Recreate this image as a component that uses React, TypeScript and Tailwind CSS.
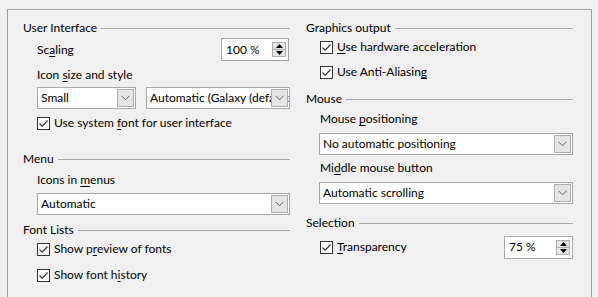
import React from 'react'

// Options dialog pane: two columns of grouped settings inside an etched frame.

function Mn({ children }: { children: React.ReactNode }) {
  return <span className="underline decoration-1 underline-offset-2">{children}</span>
}

function Heading({ children, className = '' }: { children: React.ReactNode; className?: string }) {
  return (
    <div className={`flex h-[16px] items-center gap-[4px] leading-[16px] ${className}`}>
      <span className="whitespace-nowrap">{children}</span>
      <div className="h-px flex-1 bg-[#a9a9a9]" />
    </div>
  )
}

function Label({ children, className = '' }: { children: React.ReactNode; className?: string }) {
  return <div className={`ml-[14px] h-[16px] whitespace-nowrap leading-[16px] ${className}`}>{children}</div>
}

function CheckBox() {
  return (
    <div className="flex h-[13px] w-[13px] shrink-0 items-center justify-center border border-[#333] bg-white">
      <svg width="11" height="11" viewBox="0 0 11 11" fill="none">
        <path d="M1.5 5.5 L4.2 8.2 L9.5 2.5" stroke="#333" strokeWidth="1.2" />
      </svg>
    </div>
  )
}

function Check({ children, className = '' }: { children: React.ReactNode; className?: string }) {
  return (
    <div className={`ml-[14px] flex h-[16px] items-center gap-[4px] leading-[16px] ${className}`}>
      <CheckBox />
      <span className="whitespace-nowrap">{children}</span>
    </div>
  )
}

function Chevron() {
  return (
    <svg width="9" height="6" viewBox="0 0 9 6" fill="none">
      <path d="M0.5 0.8 L4.5 4.8 L8.5 0.8" stroke="#606060" strokeWidth="1" />
    </svg>
  )
}

function Select({ value, className = '' }: { value: string; className?: string }) {
  return (
    <div className={`relative flex h-[22px] items-center overflow-hidden border border-[#a8a8a8] bg-white ${className}`}>
      <span className="flex-1 whitespace-nowrap pl-[3px] leading-[20px]">{value}</span>
      <div className="absolute right-px top-px flex h-[18px] w-[17px] items-center justify-center border border-[#adadad] bg-[#e5e5e5]">
        <Chevron />
      </div>
    </div>
  )
}

function Spin({ value, className = '' }: { value: string; className?: string }) {
  return (
    <div className={`flex h-[23px] w-[68px] items-center border border-[#a8a8a8] bg-white ${className}`}>
      <span className="flex-1 pl-[4px] leading-[20px]">{value}</span>
      <div className="mr-[2px] flex h-[15px] w-[14px] flex-col border border-[#adadad] bg-[#e5e5e5]">
        <div className="flex flex-1 items-center justify-center border-b border-[#adadad]">
          <svg width="7" height="4" viewBox="0 0 7 4">
            <path d="M0 4 L3.5 0 L7 4 Z" fill="#000" />
          </svg>
        </div>
        <div className="flex flex-1 items-center justify-center">
          <svg width="7" height="4" viewBox="0 0 7 4">
            <path d="M0 0 L3.5 4 L7 0 Z" fill="#000" />
          </svg>
        </div>
      </div>
    </div>
  )
}

export default function App() {
  return (
    <div
      className="h-[297px] w-[598px] overflow-hidden bg-[#f0f0f0] pl-[7px] pt-[9px] text-[12px] text-black"
      style={{ fontFamily: 'Lato, "Noto Sans", sans-serif' }}
    >
      <div className="flex h-[300px] w-[585px] gap-[16px] border-x border-t border-[#a0a0a0] pl-[15px]">
        {/* left column */}
        <div className="flex w-[267px] flex-col">
          <Heading className="mt-[10px]">User Interface</Heading>
          <div className="ml-[14px] mt-[2px] flex h-[23px] items-center justify-between">
            <span>
              Sc<Mn>a</Mn>ling
            </span>
            <Spin value="100 %" className="mr-px" />
          </div>
          <Label className="mt-[6px]">
            Icon <Mn>s</Mn>ize and style
          </Label>
          <div className="ml-[14px] mt-[4px] flex gap-[10px]">
            <Select value="Small" className="w-[99px]" />
            <Select value="Automatic (Galaxy (default))" className="w-[144px]" />
          </div>
          <Check className="mt-[6px]">
            Use system <Mn>f</Mn>ont for user interface
          </Check>
          <Heading className="mt-[20px]">Menu</Heading>
          <Label className="mt-[5px]">
            Icons in <Mn>m</Mn>enus
          </Label>
          <Select value="Automatic" className="ml-[14px] mt-[5px]" />
          <Heading className="mt-[7px]">Font Lists</Heading>
          <Check className="mt-[3px]">
            Show p<Mn>r</Mn>eview of fonts
          </Check>
          <Check className="mt-[10px]">
            Show font h<Mn>i</Mn>story
          </Check>
        </div>

        {/* right column */}
        <div className="flex w-[267px] flex-col">
          <Heading className="mt-[10px]">Graphics output</Heading>
          <Check className="mt-[3px]">
            <Mn>U</Mn>se hardware acceleration
          </Check>
          <Check className="mt-[9px]">
            Use Anti-Aliasin<Mn>g</Mn>
          </Check>
          <Heading className="mt-[11px]">Mouse</Heading>
          <Label className="mt-[4px]">
            Mouse <Mn>p</Mn>ositioning
          </Label>
          <Select value="No automatic positioning" className="ml-[13px] mt-[6px]" />
          <Label className="mt-[5px]">
            Mi<Mn>d</Mn>dle mouse button
          </Label>
          <Select value="Automatic scrolling" className="ml-[13px] mt-[6px]" />
          <Heading className="mt-[11px]">Selection</Heading>
          <div className="mt-[5px] flex h-[22px] items-center justify-between">
            <Check>
              <Mn>T</Mn>ransparency
            </Check>
            <Spin value="75 %" className="h-[22px] w-[69px]" />
          </div>
        </div>
      </div>
    </div>
  )
}
